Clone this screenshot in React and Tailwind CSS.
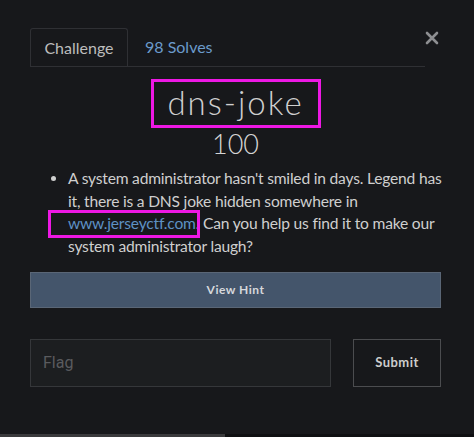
import React from 'react';

const FONT = { fontFamily: 'Lato, "Open Sans", sans-serif' };

export default function App() {
  return (
    <div className="w-[474px] h-[437px] bg-[#17181b] flex flex-col overflow-hidden" style={FONT}>
      <div className="flex-1 flex flex-col pl-[30px] pr-[33px] pt-[28px]">
        {/* Tabs */}
        <div className="flex items-start">
          <div className="w-[398px] flex border-b border-[#2f3034]">
            <div className="w-[98px] h-[38px] border border-b-0 border-[#2f3034] rounded-t-[3px] flex items-center justify-center text-[16px] text-[#bdbdbd] -mb-px bg-[#17181b]">
              Challenge
            </div>
            <div className="h-[38px] px-[17px] flex items-center text-[16px] text-[#6b9bcb]">98 Solves</div>
          </div>
          <div className="flex-1 flex justify-end pt-[3px] pr-[2px]">
            <svg width="14" height="14" viewBox="0 0 14 14">
              <path d="M2 2 L12 12 M12 2 L2 12" stroke="#8d8e91" strokeWidth="2.6" strokeLinecap="round" />
            </svg>
          </div>
        </div>

        {/* Title */}
        <div className="flex justify-center mt-[12px]">
          <div className="w-[170px] h-[49px] border-[3px] border-[#ee18e4] flex items-center justify-center">
            <span className="text-[33px] font-light text-[#cfcfcf] tracking-[2px] leading-none pb-[2px]">dns-joke</span>
          </div>
        </div>
        <div className="text-center text-[27px] font-light text-[#d4d4d4] leading-none mt-[2px]">100</div>

        {/* Description */}
        <ul className="mt-[10px] -mr-[10px] pl-[38px] text-[15.6px] leading-[22.5px] tracking-[-0.2px] text-[#cfcfcf] list-disc">
          <li>
            A system administrator hasn't smiled in days. Legend has it, there is a DNS joke hidden somewhere in{' '}
            <span className="relative">
              <span className="text-[#5e91c4]">www.jerseyctf.com</span>
              <span className="absolute left-[-20px] right-[-4px] top-[-4px] bottom-[-6px] border-[3px] border-[#ee18e4]" />
            </span>
            . Can you help us find it to make our system administrator laugh?
          </li>
        </ul>

        {/* Hint */}
        <div className="mt-[15px] h-[36px] bg-[#44556b] border border-[#5a6676] flex items-center justify-center text-[12px] font-bold tracking-[0.5px] text-[#d6d8dc]">
          View Hint
        </div>

        {/* Flag form */}
        <div className="mt-[31px] flex gap-[22px]">
          <div className="w-[301px] h-[48px] bg-[#1c1e20] border border-[#35373a] flex items-center px-[12px] text-[16px] text-[#5a5b5e]" style={{ fontFamily: 'Roboto, sans-serif' }}>
            Flag
          </div>
          <div className="flex-1 h-[48px] bg-[#17181b] border border-[#4b4c4f] flex items-center justify-center text-[13px] font-bold tracking-[0.5px] text-[#cdcdcd]">
            Submit
          </div>
        </div>
      </div>
      <div className="h-[3px] flex">
        <div className="w-[225px] bg-[#3a3a3c]" />
        <div className="flex-1 bg-[#0f1012]" />
      </div>
    </div>
  );
}
